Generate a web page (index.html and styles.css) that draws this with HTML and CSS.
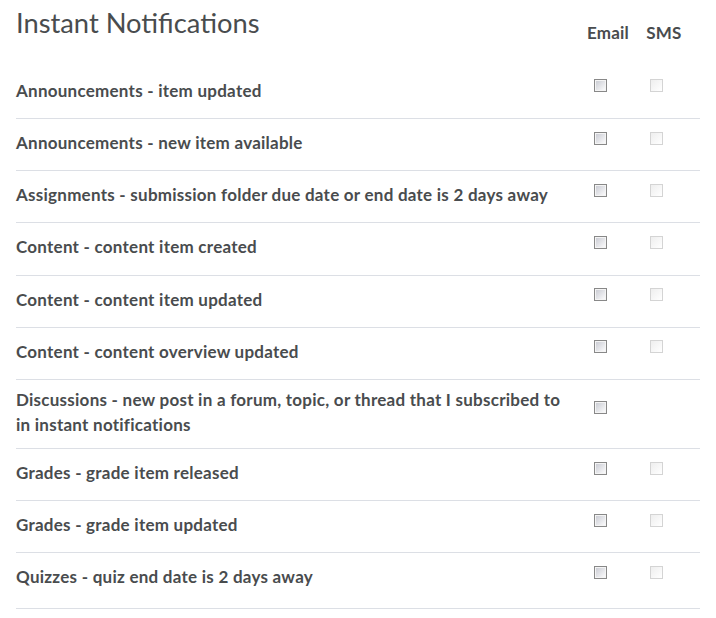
FILE: index.html
```html
<!DOCTYPE html>
<html lang="en">
<head>
    <meta charset="UTF-8">
    <link rel="stylesheet" href="styles.css">
    <title>Instant Notifications</title>
</head>
<body>
<div class="notify">
    <div class="notify_head">
        <h1 class="title">Instant Notifications</h1>
        <span class="col_name">Email</span>
        <span class="col_name">SMS</span>
    </div>

    <div class="row">
        <label class="label">Announcements - item updated</label>
        <span class="cell"><input type="checkbox" class="chk"></span>
        <span class="cell"><input type="checkbox" class="chk" disabled></span>
    </div>
    <div class="row">
        <label class="label">Announcements - new item available</label>
        <span class="cell"><input type="checkbox" class="chk"></span>
        <span class="cell"><input type="checkbox" class="chk" disabled></span>
    </div>
    <div class="row">
        <label class="label">Assignments - submission folder due date or end date is 2 days away</label>
        <span class="cell"><input type="checkbox" class="chk"></span>
        <span class="cell"><input type="checkbox" class="chk" disabled></span>
    </div>
    <div class="row">
        <label class="label">Content - content item created</label>
        <span class="cell"><input type="checkbox" class="chk"></span>
        <span class="cell"><input type="checkbox" class="chk" disabled></span>
    </div>
    <div class="row">
        <label class="label">Content - content item updated</label>
        <span class="cell"><input type="checkbox" class="chk"></span>
        <span class="cell"><input type="checkbox" class="chk" disabled></span>
    </div>
    <div class="row">
        <label class="label">Content - content overview updated</label>
        <span class="cell"><input type="checkbox" class="chk"></span>
        <span class="cell"><input type="checkbox" class="chk" disabled></span>
    </div>
    <div class="row">
        <label class="label">Discussions - new post in a forum, topic, or thread that I subscribed to in instant notifications</label>
        <span class="cell"><input type="checkbox" class="chk"></span>
        <span class="cell"></span>
    </div>
    <div class="row">
        <label class="label">Grades - grade item released</label>
        <span class="cell"><input type="checkbox" class="chk"></span>
        <span class="cell"><input type="checkbox" class="chk" disabled></span>
    </div>
    <div class="row">
        <label class="label">Grades - grade item updated</label>
        <span class="cell"><input type="checkbox" class="chk"></span>
        <span class="cell"><input type="checkbox" class="chk" disabled></span>
    </div>
    <div class="row row_last">
        <label class="label">Quizzes - quiz end date is 2 days away</label>
        <span class="cell"><input type="checkbox" class="chk"></span>
        <span class="cell"><input type="checkbox" class="chk" disabled></span>
    </div>
</div>
</body>
</html>
```

FILE: styles.css
```css
* {
    padding: 0;
    margin: 0;
    box-sizing: border-box;
}

body {
    background: #fff;
    color: #494c4e;
    font-family: Lato, "Open Sans", sans-serif;
}

.notify {
    padding: 0 16px;
}

.notify_head,
.row {
    display: grid;
    grid-template-columns: 1fr 56px 56px 8px;
}

.notify_head {
    height: 66.8px;
    padding-top: 6.5px;
}

.title {
    font-size: 27.3px;
    font-weight: 400;
    line-height: 1.2;
}

.col_name {
    margin-top: 16.5px;
    font-size: 17px;
    font-weight: 700;
    line-height: 1.2;
    letter-spacing: 0.2px;
    text-align: center;
}

.row {
    min-height: 52.2px;
    padding: 7px 0;
    align-items: center;
    border-bottom: 1px solid #dcdfe5;
}

.row_last {
    min-height: 56px;
    padding-bottom: 11px;
}

.label {
    padding: 0 12px 4px 0;
    font-size: 17px;
    font-weight: 700;
    line-height: 25px;
    letter-spacing: 0.25px;
}

.cell {
    padding-left: 14px;
}

.chk {
    -webkit-appearance: none;
    appearance: none;
    display: block;
    width: 13px;
    height: 13px;
    margin-bottom: 13px;
    border: 1px solid #888;
    box-shadow: inset 0 0 0 1px #f4f4f4;
    background: linear-gradient(135deg, #c6c8d0, #fff);
}

.chk:disabled {
    border-color: #d4d4d4;
    box-shadow: none;
    background: linear-gradient(135deg, #eeeeee, #fff);
}
```
